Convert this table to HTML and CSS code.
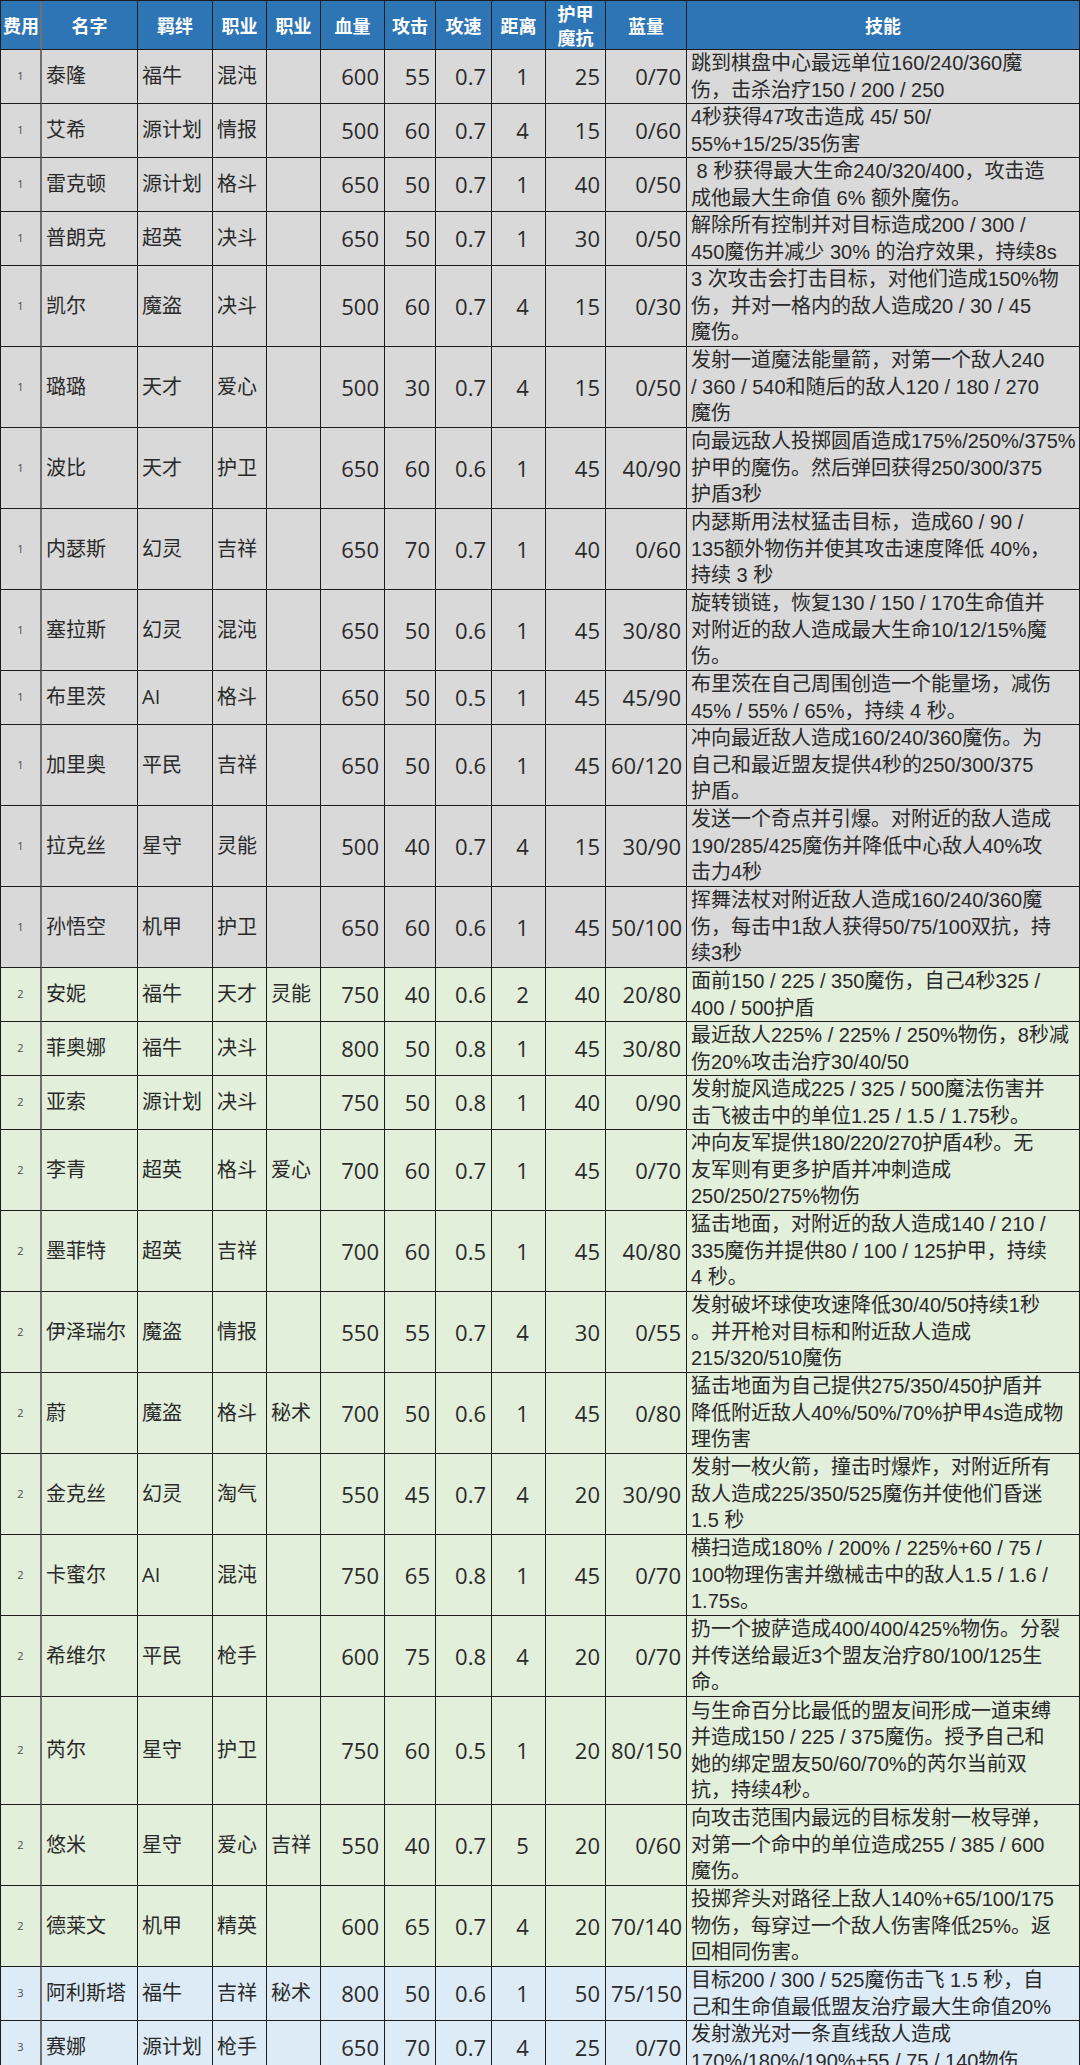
FILE: index.html
```html
<!DOCTYPE html>
<html lang="zh-CN">
<head>
<meta charset="utf-8">
<title>英雄数据表</title>
<link rel="stylesheet" href="styles.css">
</head>
<body>
<table class="grid">
  <colgroup>
    <col class="w-cost"><col class="w-name"><col class="w-bond"><col class="w-job"><col class="w-job">
    <col class="w-hp"><col class="w-atk"><col class="w-spd"><col class="w-rng"><col class="w-arm">
    <col class="w-mana"><col class="w-skill">
  </colgroup>
  <thead>
    <tr class="hd">
      <th>费用</th><th>名字</th><th>羁绊</th><th>职业</th><th>职业</th><th>血量</th><th>攻击</th><th>攻速</th><th>距离</th><th>护甲<br>魔抗</th><th>蓝量</th><th>技能</th>
    </tr>
  </thead>
  <tbody>
    <tr class="c1 l2"><td class="cost">1</td><td class="t">泰隆</td><td class="t">福牛</td><td class="t">混沌</td><td class="t"></td><td class="n">600</td><td class="n">55</td><td class="n">0.7</td><td class="d">1</td><td class="n">25</td><td class="n">0/70</td><td class="sk">跳到棋盘中心最远单位160/240/360魔<br>伤，击杀治疗150 / 200 / 250</td></tr>
    <tr class="c1 l2"><td class="cost">1</td><td class="t">艾希</td><td class="t">源计划</td><td class="t">情报</td><td class="t"></td><td class="n">500</td><td class="n">60</td><td class="n">0.7</td><td class="d">4</td><td class="n">15</td><td class="n">0/60</td><td class="sk">4秒获得47攻击造成 45/ 50/<br>55%+15/25/35伤害</td></tr>
    <tr class="c1 l2"><td class="cost">1</td><td class="t">雷克顿</td><td class="t">源计划</td><td class="t">格斗</td><td class="t"></td><td class="n">650</td><td class="n">50</td><td class="n">0.7</td><td class="d">1</td><td class="n">40</td><td class="n">0/50</td><td class="sk">&nbsp;8 秒获得最大生命240/320/400，攻击造<br>成他最大生命值 6% 额外魔伤。</td></tr>
    <tr class="c1 l2"><td class="cost">1</td><td class="t">普朗克</td><td class="t">超英</td><td class="t">决斗</td><td class="t"></td><td class="n">650</td><td class="n">50</td><td class="n">0.7</td><td class="d">1</td><td class="n">30</td><td class="n">0/50</td><td class="sk">解除所有控制并对目标造成200 / 300 /<br>450魔伤并减少 30% 的治疗效果，持续8s</td></tr>
    <tr class="c1 l3"><td class="cost">1</td><td class="t">凯尔</td><td class="t">魔盗</td><td class="t">决斗</td><td class="t"></td><td class="n">500</td><td class="n">60</td><td class="n">0.7</td><td class="d">4</td><td class="n">15</td><td class="n">0/30</td><td class="sk">3 次攻击会打击目标，对他们造成150%物<br>伤，并对一格内的敌人造成20 / 30 / 45<br>魔伤。</td></tr>
    <tr class="c1 l3"><td class="cost">1</td><td class="t">璐璐</td><td class="t">天才</td><td class="t">爱心</td><td class="t"></td><td class="n">500</td><td class="n">30</td><td class="n">0.7</td><td class="d">4</td><td class="n">15</td><td class="n">0/50</td><td class="sk">发射一道魔法能量箭，对第一个敌人240<br>/ 360 / 540和随后的敌人120 / 180 / 270<br>魔伤</td></tr>
    <tr class="c1 l3"><td class="cost">1</td><td class="t">波比</td><td class="t">天才</td><td class="t">护卫</td><td class="t"></td><td class="n">650</td><td class="n">60</td><td class="n">0.6</td><td class="d">1</td><td class="n">45</td><td class="n">40/90</td><td class="sk">向最远敌人投掷圆盾造成175%/250%/375%<br>护甲的魔伤。然后弹回获得250/300/375<br>护盾3秒</td></tr>
    <tr class="c1 l3"><td class="cost">1</td><td class="t">内瑟斯</td><td class="t">幻灵</td><td class="t">吉祥</td><td class="t"></td><td class="n">650</td><td class="n">70</td><td class="n">0.7</td><td class="d">1</td><td class="n">40</td><td class="n">0/60</td><td class="sk">内瑟斯用法杖猛击目标，造成60 / 90 /<br>135额外物伤并使其攻击速度降低 40%，<br>持续 3 秒</td></tr>
    <tr class="c1 l3"><td class="cost">1</td><td class="t">塞拉斯</td><td class="t">幻灵</td><td class="t">混沌</td><td class="t"></td><td class="n">650</td><td class="n">50</td><td class="n">0.6</td><td class="d">1</td><td class="n">45</td><td class="n">30/80</td><td class="sk">旋转锁链，恢复130 / 150 / 170生命值并<br>对附近的敌人造成最大生命10/12/15%魔<br>伤。</td></tr>
    <tr class="c1 l2"><td class="cost">1</td><td class="t">布里茨</td><td class="t">AI</td><td class="t">格斗</td><td class="t"></td><td class="n">650</td><td class="n">50</td><td class="n">0.5</td><td class="d">1</td><td class="n">45</td><td class="n">45/90</td><td class="sk">布里茨在自己周围创造一个能量场，减伤<br>45% / 55% / 65%，持续 4 秒。</td></tr>
    <tr class="c1 l3"><td class="cost">1</td><td class="t">加里奥</td><td class="t">平民</td><td class="t">吉祥</td><td class="t"></td><td class="n">650</td><td class="n">50</td><td class="n">0.6</td><td class="d">1</td><td class="n">45</td><td class="n">60/120</td><td class="sk">冲向最近敌人造成160/240/360魔伤。为<br>自己和最近盟友提供4秒的250/300/375<br>护盾。</td></tr>
    <tr class="c1 l3"><td class="cost">1</td><td class="t">拉克丝</td><td class="t">星守</td><td class="t">灵能</td><td class="t"></td><td class="n">500</td><td class="n">40</td><td class="n">0.7</td><td class="d">4</td><td class="n">15</td><td class="n">30/90</td><td class="sk">发送一个奇点并引爆。对附近的敌人造成<br>190/285/425魔伤并降低中心敌人40%攻<br>击力4秒</td></tr>
    <tr class="c1 l3"><td class="cost">1</td><td class="t">孙悟空</td><td class="t">机甲</td><td class="t">护卫</td><td class="t"></td><td class="n">650</td><td class="n">60</td><td class="n">0.6</td><td class="d">1</td><td class="n">45</td><td class="n">50/100</td><td class="sk">挥舞法杖对附近敌人造成160/240/360魔<br>伤，每击中1敌人获得50/75/100双抗，持<br>续3秒</td></tr>
    <tr class="c2 l2"><td class="cost">2</td><td class="t">安妮</td><td class="t">福牛</td><td class="t">天才</td><td class="t">灵能</td><td class="n">750</td><td class="n">40</td><td class="n">0.6</td><td class="d">2</td><td class="n">40</td><td class="n">20/80</td><td class="sk">面前150 / 225 / 350魔伤，自己4秒325 /<br>400 / 500护盾</td></tr>
    <tr class="c2 l2"><td class="cost">2</td><td class="t">菲奥娜</td><td class="t">福牛</td><td class="t">决斗</td><td class="t"></td><td class="n">800</td><td class="n">50</td><td class="n">0.8</td><td class="d">1</td><td class="n">45</td><td class="n">30/80</td><td class="sk">最近敌人225% / 225% / 250%物伤，8秒减<br>伤20%攻击治疗30/40/50</td></tr>
    <tr class="c2 l2"><td class="cost">2</td><td class="t">亚索</td><td class="t">源计划</td><td class="t">决斗</td><td class="t"></td><td class="n">750</td><td class="n">50</td><td class="n">0.8</td><td class="d">1</td><td class="n">40</td><td class="n">0/90</td><td class="sk">发射旋风造成225 / 325 / 500魔法伤害并<br>击飞被击中的单位1.25 / 1.5 / 1.75秒。</td></tr>
    <tr class="c2 l3"><td class="cost">2</td><td class="t">李青</td><td class="t">超英</td><td class="t">格斗</td><td class="t">爱心</td><td class="n">700</td><td class="n">60</td><td class="n">0.7</td><td class="d">1</td><td class="n">45</td><td class="n">0/70</td><td class="sk">冲向友军提供180/220/270护盾4秒。无<br>友军则有更多护盾并冲刺造成<br>250/250/275%物伤</td></tr>
    <tr class="c2 l3"><td class="cost">2</td><td class="t">墨菲特</td><td class="t">超英</td><td class="t">吉祥</td><td class="t"></td><td class="n">700</td><td class="n">60</td><td class="n">0.5</td><td class="d">1</td><td class="n">45</td><td class="n">40/80</td><td class="sk">猛击地面，对附近的敌人造成140 / 210 /<br>335魔伤并提供80 / 100 / 125护甲，持续<br>4 秒。</td></tr>
    <tr class="c2 l3"><td class="cost">2</td><td class="t">伊泽瑞尔</td><td class="t">魔盗</td><td class="t">情报</td><td class="t"></td><td class="n">550</td><td class="n">55</td><td class="n">0.7</td><td class="d">4</td><td class="n">30</td><td class="n">0/55</td><td class="sk">发射破坏球使攻速降低30/40/50持续1秒<br>。并开枪对目标和附近敌人造成<br>215/320/510魔伤</td></tr>
    <tr class="c2 l3"><td class="cost">2</td><td class="t">蔚</td><td class="t">魔盗</td><td class="t">格斗</td><td class="t">秘术</td><td class="n">700</td><td class="n">50</td><td class="n">0.6</td><td class="d">1</td><td class="n">45</td><td class="n">0/80</td><td class="sk">猛击地面为自己提供275/350/450护盾并<br>降低附近敌人40%/50%/70%护甲4s造成物<br>理伤害</td></tr>
    <tr class="c2 l3"><td class="cost">2</td><td class="t">金克丝</td><td class="t">幻灵</td><td class="t">淘气</td><td class="t"></td><td class="n">550</td><td class="n">45</td><td class="n">0.7</td><td class="d">4</td><td class="n">20</td><td class="n">30/90</td><td class="sk">发射一枚火箭，撞击时爆炸，对附近所有<br>敌人造成225/350/525魔伤并使他们昏迷<br>1.5 秒</td></tr>
    <tr class="c2 l3"><td class="cost">2</td><td class="t">卡蜜尔</td><td class="t">AI</td><td class="t">混沌</td><td class="t"></td><td class="n">750</td><td class="n">65</td><td class="n">0.8</td><td class="d">1</td><td class="n">45</td><td class="n">0/70</td><td class="sk">横扫造成180% / 200% / 225%+60 / 75 /<br>100物理伤害并缴械击中的敌人1.5 / 1.6 /<br>1.75s。</td></tr>
    <tr class="c2 l3"><td class="cost">2</td><td class="t">希维尔</td><td class="t">平民</td><td class="t">枪手</td><td class="t"></td><td class="n">600</td><td class="n">75</td><td class="n">0.8</td><td class="d">4</td><td class="n">20</td><td class="n">0/70</td><td class="sk">扔一个披萨造成400/400/425%物伤。分裂<br>并传送给最近3个盟友治疗80/100/125生<br>命。</td></tr>
    <tr class="c2 l4"><td class="cost">2</td><td class="t">芮尔</td><td class="t">星守</td><td class="t">护卫</td><td class="t"></td><td class="n">750</td><td class="n">60</td><td class="n">0.5</td><td class="d">1</td><td class="n">20</td><td class="n">80/150</td><td class="sk">与生命百分比最低的盟友间形成一道束缚<br>并造成150 / 225 / 375魔伤。授予自己和<br>她的绑定盟友50/60/70%的芮尔当前双<br>抗，持续4秒。</td></tr>
    <tr class="c2 l3"><td class="cost">2</td><td class="t">悠米</td><td class="t">星守</td><td class="t">爱心</td><td class="t">吉祥</td><td class="n">550</td><td class="n">40</td><td class="n">0.7</td><td class="d">5</td><td class="n">20</td><td class="n">0/60</td><td class="sk">向攻击范围内最远的目标发射一枚导弹，<br>对第一个命中的单位造成255 / 385 / 600<br>魔伤。</td></tr>
    <tr class="c2 l3"><td class="cost">2</td><td class="t">德莱文</td><td class="t">机甲</td><td class="t">精英</td><td class="t"></td><td class="n">600</td><td class="n">65</td><td class="n">0.7</td><td class="d">4</td><td class="n">20</td><td class="n">70/140</td><td class="sk">投掷斧头对路径上敌人140%+65/100/175<br>物伤，每穿过一个敌人伤害降低25%。返<br>回相同伤害。</td></tr>
    <tr class="c3 l2"><td class="cost">3</td><td class="t">阿利斯塔</td><td class="t">福牛</td><td class="t">吉祥</td><td class="t">秘术</td><td class="n">800</td><td class="n">50</td><td class="n">0.6</td><td class="d">1</td><td class="n">50</td><td class="n">75/150</td><td class="sk">目标200 / 300 / 525魔伤击飞 1.5 秒，自<br>己和生命值最低盟友治疗最大生命值20%</td></tr>
    <tr class="c3 l2"><td class="cost">3</td><td class="t">赛娜</td><td class="t">源计划</td><td class="t">枪手</td><td class="t"></td><td class="n">650</td><td class="n">70</td><td class="n">0.7</td><td class="d">4</td><td class="n">25</td><td class="n">0/70</td><td class="sk">发射激光对一条直线敌人造成<br>170%/180%/190%+55 / 75 / 140物伤</td></tr>
  </tbody>
</table>
</body>
</html>
```
FILE: styles.css
```css
html, body {
  margin: 0;
  padding: 0;
  background: #ffffff;
}

.grid {
  border-collapse: separate;
  border-spacing: 0;
  table-layout: fixed;
  width: 1080px;
  border-top: 1px solid #1c1c1c;
  border-left: 1px solid #1c1c1c;
  font-family: "Open Sans", "Noto Sans CJK SC", sans-serif;
  color: #2a2a2a;
}

.w-cost { width: 41px; }
.w-name { width: 96px; }
.w-bond { width: 75px; }
.w-job { width: 54px; }
.w-hp { width: 64px; }
.w-atk { width: 51px; }
.w-spd { width: 56px; }
.w-rng { width: 54px; }
.w-arm { width: 60px; }
.w-mana { width: 81px; }
.w-skill { width: 393px; }

.grid th,
.grid td {
  box-sizing: border-box;
  border-right: 1px solid #1c1c1c;
  border-bottom: 1px solid #1c1c1c;
  padding: 0 5px;
  vertical-align: middle;
  white-space: nowrap;
  overflow: hidden;
}

.grid th:first-child,
.grid td:first-child {
  border-right: 2px solid #6e6e6e;
}

.grid th {
  background: #2e75b6;
  color: #ffffff;
  font-family: "Noto Sans CJK SC", sans-serif;
  font-weight: 700;
  font-size: 18px;
  line-height: 24px;
  text-align: center;
  padding: 0 2px;
}

.hd { height: 46px; }

.l2 { height: 54px; }
.l3 { height: 81px; }
.l4 { height: 108px; }

.c1 td { background: #d9d9d9; }
.c2 td { background: #e2efda; }
.c3 td { background: #ddebf7; }

.grid td {
  font-size: 20px;
  line-height: 26.5px;
}

.grid td.cost {
  font-size: 11px;
  text-align: center;
  color: #4a4a4a;
  padding: 0;
}

.grid td.t {
  padding-left: 4px;
  text-align: left;
}

.grid td.n {
  font-size: 22px;
  text-align: right;
  padding-right: 5px;
}

.grid td.d {
  font-size: 22px;
  text-align: center;
  padding: 0 0 0 8px;
}

.grid td.sk {
  font-family: "Liberation Sans", "Noto Sans CJK SC", sans-serif;
  font-size: 20px;
  line-height: 26.5px;
  padding: 0 3px 0 4px;
  color: #2a2a2a;
}
```
